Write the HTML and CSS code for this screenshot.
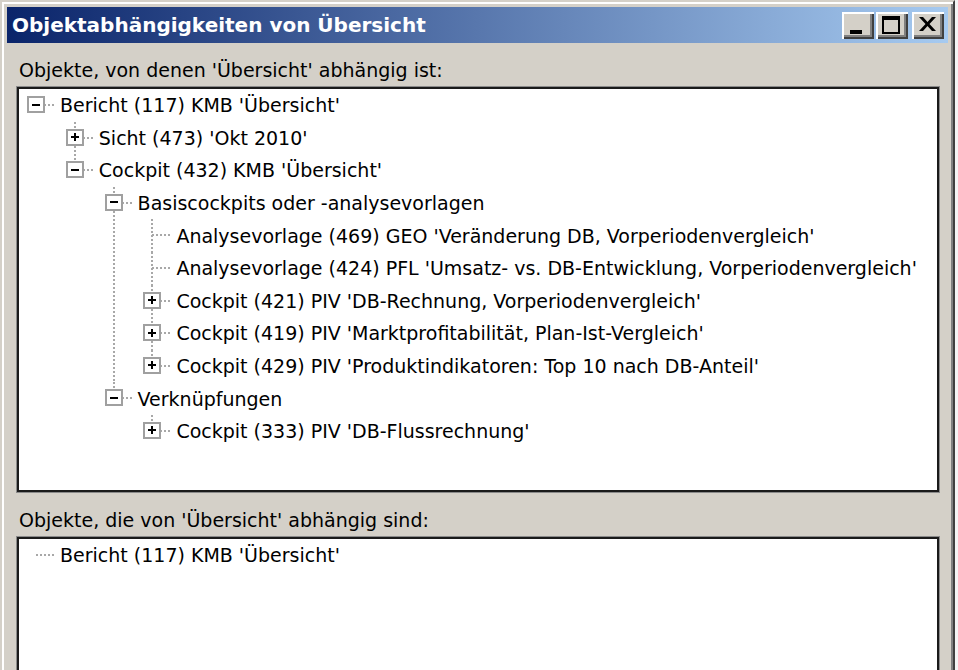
FILE: index.html
```html
<!DOCTYPE html>
<html lang="de">
<head>
<meta charset="utf-8">
<title>Objektabhängigkeiten von Übersicht</title>
<link rel="stylesheet" href="styles.css">
</head>
<body>
<div class="window">
  <div class="titlebar">
    <span class="title">Objektabhängigkeiten von Übersicht</span>
    <div class="caps">
      <span class="cap cap-min"><svg viewBox="0 0 32 27" width="32" height="27"><rect x="8" y="18" width="12" height="4" fill="#000"/></svg></span>
      <span class="cap cap-max"><svg viewBox="0 0 32 27" width="32" height="27"><path d="M6 4h18v18H6z M8 8v12h14V8z" fill="#000" fill-rule="evenodd"/></svg></span>
      <span class="cap cap-close"><svg viewBox="0 0 32 27" width="32" height="27"><path d="M7 5h4l4.5 5 4.5-5h4l-6.5 7 6.5 7h-4l-4.5-5-4.5 5h-4l6.5-7z" fill="#000"/></svg></span>
    </div>
  </div>
  <div class="client">
    <div class="label">Objekte, von denen 'Übersicht' abhängig ist:</div>
    <div class="treebox treebox-top">
      <ul class="tree">
        <li>
          <div class="row"><span class="gutter"><span class="exp"></span></span><span class="text">Bericht (117) KMB 'Übersicht'</span></div>
          <ul>
            <li><div class="row"><span class="gutter"><span class="exp plus"></span></span><span class="text">Sicht (473) 'Okt 2010'</span></div></li>
            <li>
              <div class="row"><span class="gutter"><span class="exp"></span></span><span class="text">Cockpit (432) KMB 'Übersicht'</span></div>
              <ul>
                <li>
                  <div class="row"><span class="gutter"><span class="exp"></span></span><span class="text">Basiscockpits oder -analysevorlagen</span></div>
                  <ul>
                    <li><div class="row"><span class="gutter"></span><span class="text">Analysevorlage (469) GEO 'Veränderung DB, Vorperiodenvergleich'</span></div></li>
                    <li><div class="row"><span class="gutter"></span><span class="text">Analysevorlage (424) PFL 'Umsatz- vs. DB-Entwicklung, Vorperiodenvergleich'</span></div></li>
                    <li><div class="row"><span class="gutter"><span class="exp plus"></span></span><span class="text">Cockpit (421) PIV 'DB-Rechnung, Vorperiodenvergleich'</span></div></li>
                    <li><div class="row"><span class="gutter"><span class="exp plus"></span></span><span class="text">Cockpit (419) PIV 'Marktprofitabilität, Plan-Ist-Vergleich'</span></div></li>
                    <li><div class="row"><span class="gutter"><span class="exp plus"></span></span><span class="text">Cockpit (429) PIV 'Produktindikatoren: Top 10 nach DB-Anteil'</span></div></li>
                  </ul>
                </li>
                <li>
                  <div class="row"><span class="gutter"><span class="exp"></span></span><span class="text">Verknüpfungen</span></div>
                  <ul>
                    <li><div class="row"><span class="gutter"><span class="exp plus"></span></span><span class="text">Cockpit (333) PIV 'DB-Flussrechnung'</span></div></li>
                  </ul>
                </li>
              </ul>
            </li>
          </ul>
        </li>
      </ul>
    </div>
    <div class="label label-second">Objekte, die von 'Übersicht' abhängig sind:</div>
    <div class="treebox treebox-bottom">
      <ul class="tree">
        <li><div class="row"><span class="gutter"></span><span class="text">Bericht (117) KMB 'Übersicht'</span></div></li>
      </ul>
    </div>
  </div>
</div>
</body>
</html>
```

FILE: styles.css
```css
html, body {
  margin: 0;
  padding: 0;
  background: #f4f4f4;
  overflow: hidden;
  height: 100%;
}

body {
  font-family: "DejaVu Sans", Verdana, sans-serif;
  font-size: 19px;
  color: #000;
}

.window {
  width: 955px;
  height: 720px;
  box-sizing: border-box;
  background: #d4d0c8;
  border-top: 2px solid #d4d0c8;
  border-left: 2px solid #d4d0c8;
  border-right: 2px solid #404040;
  border-bottom: 2px solid #404040;
  box-shadow: inset 2px 2px 0 #fff, inset -2px -2px 0 #808080;
  padding: 5px 5px 0 5px;
}

.titlebar {
  height: 36px;
  display: flex;
  align-items: center;
  justify-content: space-between;
  background: linear-gradient(to right, #0a246a 0%, #a6caf0 100%);
  padding: 0 4px 0 5px;
}

.title {
  color: #fff;
  font-weight: bold;
  font-size: 20px;
  white-space: nowrap;
}

.caps {
  display: flex;
  align-items: center;
}

.cap {
  display: block;
  width: 32px;
  height: 27px;
  box-sizing: border-box;
  background: #d4d0c8;
  position: relative;
  box-shadow: inset 2px 2px 0 #fff, inset -2px -2px 0 #404040, inset -4px -4px 0 #808080;
}

.cap svg {
  display: block;
}

.cap-min {
  margin-right: 2px;
}

.cap-max {
  margin-right: 4px;
}

.client {
  padding: 0 9px 0 10px;
}

.label {
  line-height: 24px;
  margin: 15px 0 5px 2px;
  white-space: nowrap;
}

.label-second {
  margin-top: 16px;
}

.treebox {
  background: #fff;
  border: 2px solid #1a1a1a;
  box-shadow: 0 0 0 1px #8a8a8a;
  box-sizing: border-box;
}

.treebox-top {
  height: 405px;
}

.treebox-bottom {
  height: 200px;
}

.tree,
.tree ul {
  list-style: none;
  margin: 0;
  padding: 0;
}

.tree ul {
  padding-left: 38.8px;
}

.tree li {
  position: relative;
}

.tree ul > li::before {
  content: "";
  position: absolute;
  left: 16px;
  top: 0;
  bottom: 0;
  width: 2px;
  background: repeating-linear-gradient(to bottom, #a8a8a8 0 2px, transparent 2px 4px);
}

.tree ul > li:last-child::before {
  bottom: auto;
  height: 16px;
}

.row {
  display: flex;
  align-items: center;
  height: 32.6px;
  white-space: nowrap;
}

.gutter {
  flex: none;
  width: 41px;
  height: 100%;
  position: relative;
}

.gutter::before {
  content: "";
  position: absolute;
  left: 17px;
  top: 15px;
  width: 20px;
  height: 2px;
  background: repeating-linear-gradient(to right, #a8a8a8 0 2px, transparent 2px 4px);
}

.exp {
  position: absolute;
  left: 8px;
  top: 7px;
  width: 18px;
  height: 17px;
  box-sizing: border-box;
  border: 2px solid #a0a0a0;
  background: #fff;
  z-index: 1;
}

.exp::before {
  content: "";
  position: absolute;
  left: 3px;
  top: 5.5px;
  width: 8px;
  height: 2px;
  background: #000;
}

.exp.plus::after {
  content: "";
  position: absolute;
  left: 6px;
  top: 2.5px;
  width: 2px;
  height: 8px;
  background: #000;
}

.text {
  line-height: 24px;
}
```
